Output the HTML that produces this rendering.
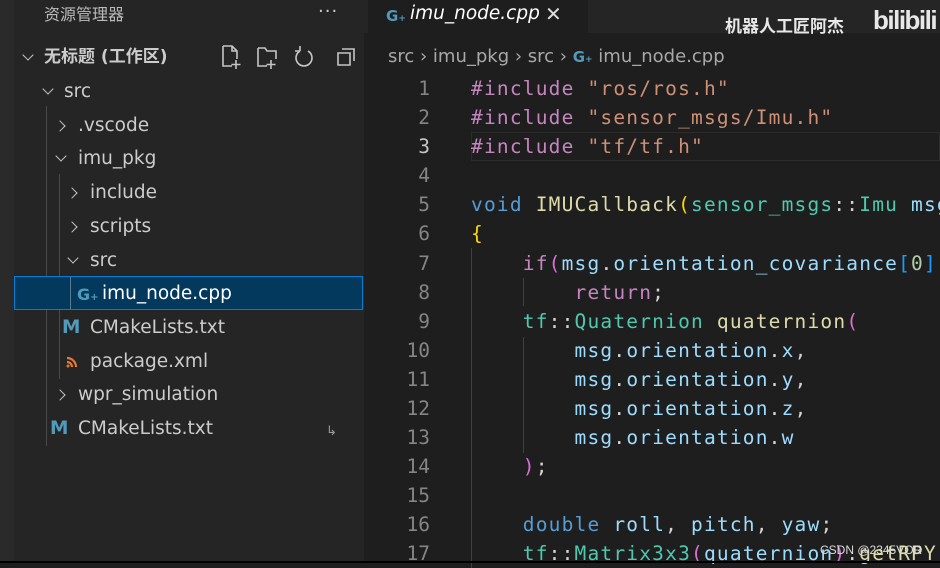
<!DOCTYPE html>
<html><head><meta charset="utf-8"><style>
*{margin:0;padding:0;box-sizing:border-box}
body{width:940px;height:563px;overflow:hidden;background:#1e1e1e;position:relative;font-family:"DejaVu Sans","Noto Sans CJK SC",sans-serif;color:#cccccc}
.abs{position:absolute;white-space:pre}
#strip{left:0;top:0;width:14px;height:563px;background:#2a2a2a}
#side{left:14px;top:0;width:350px;height:563px;background:#252526}
.row{position:absolute;font-size:18.5px;color:#cccccc;white-space:pre;line-height:24px}
.chev{position:absolute;width:8px;height:8px;border-right:1.6px solid #c5c5c5;border-bottom:1.6px solid #c5c5c5}
.down{transform:rotate(45deg)}
.right{transform:rotate(-45deg)}
.guide{position:absolute;width:1px;background:#4a4a4a}
#tabs{left:364px;top:0;width:576px;height:33px;background:#252526}
#tab{left:368px;top:0;width:220px;height:33px;background:#1e1e1e}
.code{font-family:"DejaVu Sans Mono",monospace;font-size:19.5px;line-height:29.1px}
.ln{position:absolute;left:380px;width:50px;text-align:right;color:#858585}
.cl{position:absolute;left:471px;color:#d4d4d4;white-space:pre;letter-spacing:1.2px}
.k{color:#c586c0}.s{color:#ce9178}.b{color:#569cd6}.f{color:#dcdcaa}.t{color:#4ec9b0}.v{color:#9cdcfe}.y{color:#ffd700}.p{color:#da70d6}.n{color:#b5cea8}.bl{color:#179fff}
</style></head><body>
<div class="abs" id="strip"></div>
<div class="abs" id="side"></div>
<div class="row" style="left:44px;top:3px;font-size:16px;color:#bbbbbb">资源管理器</div>
<div class="row" style="left:318px;top:0px;font-size:18px;letter-spacing:1px">···</div>
<div class="chev down" style="left:24px;top:51px"></div>
<div class="row" style="left:44px;top:45px;font-size:17px;font-weight:bold">无标题 (工作区)</div>
<svg class="abs" style="left:220px;top:44px" width="140" height="26" viewBox="0 0 140 26" fill="none" stroke="#c5c5c5" stroke-width="1.6">
<path d="M3 2h9l5 5v8M3 2v20h9M12 2v5h5M16 16v9M11.5 20.5h9"/>
<path d="M38 4h7l2 3h9v8M38 4v18h9M51 16v9M46.5 20.5h9"/>
<path d="M80 7a8 8 0 1 0 8 0M80 7v-5M80 7h-5"/>
<path d="M118 9h12v12h-12zM122 5h12v12"/>
</svg>
<div class="chev down" style="left:44px;top:85px"></div>
<div class="row" style="left:64px;top:80px">src</div>
<div class="guide" style="left:46px;top:106px;height:340px"></div>
<div class="chev right" style="left:56px;top:122px"></div>
<div class="row" style="left:78px;top:114px">.vscode</div>
<div class="chev down" style="left:57px;top:152px"></div>
<div class="row" style="left:78px;top:147px">imu_pkg</div>
<div class="guide" style="left:59px;top:174px;height:205px"></div>
<div class="chev right" style="left:68px;top:189px"></div>
<div class="row" style="left:90px;top:181px">include</div>
<div class="chev right" style="left:68px;top:223px"></div>
<div class="row" style="left:90px;top:215px">scripts</div>
<div class="chev down" style="left:69px;top:254px"></div>
<div class="row" style="left:90px;top:249px">src</div>
<div class="abs" style="left:14px;top:276px;width:349px;height:34px;background:#04395e;border:1px solid #007fd4"></div>
<div class="guide" style="left:70px;top:277px;height:32px;background:#5a7a90"></div>
<div class="row" style="left:77px;top:283px;font-size:16px;color:#519aba;font-weight:bold">G<span style="font-size:10px">+</span></div>
<div class="row" style="left:102px;top:282px;color:#fff">imu_node.cpp</div>
<div class="row" style="left:62px;top:316px;color:#519aba;font-weight:bold">M</div>
<div class="row" style="left:90px;top:316px">CMakeLists.txt</div>
<svg class="abs" style="left:66px;top:354px" width="14" height="14" viewBox="0 0 14 14" fill="none" stroke="#e37933" stroke-width="2.2"><path d="M1 4a9 9 0 0 1 9 9M1 8a5 5 0 0 1 5 5"/><circle cx="2" cy="12" r="1.5" fill="#e37933" stroke="none"/></svg>
<div class="row" style="left:90px;top:350px">package.xml</div>
<div class="chev right" style="left:56px;top:391px"></div>
<div class="row" style="left:78px;top:383px">wpr_simulation</div>
<div class="row" style="left:50px;top:417px;color:#519aba;font-weight:bold">M</div>
<div class="row" style="left:78px;top:417px">CMakeLists.txt</div>
<div class="row" style="left:326px;top:420px;font-size:13px;color:#999">↳</div>

<div class="abs" id="tabs"></div>
<div class="abs" id="tab"></div>
<div class="row" style="left:386px;top:4px;font-size:15px;color:#519aba;font-weight:bold">G<span style="font-size:9px">+</span></div>
<div class="row" style="left:410px;top:2px;font-style:italic;color:#fff">imu_node.cpp</div>
<div class="row" style="left:545px;top:2px;font-size:20px;color:#ddd">✕</div>
<div class="row" style="left:725px;top:15px;font-size:17px;color:#e8e8e8;font-weight:bold">机器人工匠阿杰</div>
<div class="row" style="left:873px;top:8px;font-size:26px;color:#e8e8e8;font-weight:bold;font-family:'Liberation Sans',sans-serif;letter-spacing:-1.5px">bilibili</div>

<div class="row" style="left:388px;top:45px;font-size:18px;color:#a9a9a9">src › imu_pkg › src › <span style="color:#519aba;font-weight:bold;font-size:15px">G<span style="font-size:9px">+</span></span> imu_node.cpp</div>

<div class="code">
<div class="abs" style="left:471px;top:132px;width:469px;height:29px;border:1px solid #2c2c2c"></div>
<div class="guide" style="left:471px;top:248px;height:320px;background:#404040"></div>
<div class="guide" style="left:523px;top:278px;height:28px;background:#404040"></div>
<div class="guide" style="left:523px;top:337px;height:116px;background:#404040"></div>
<div class="ln" style="top:74px">1</div><div class="cl" style="top:74px"><span class="k">#include</span> <span class="s">"ros/ros.h"</span></div>
<div class="ln" style="top:103px">2</div><div class="cl" style="top:103px"><span class="k">#include</span> <span class="s">"sensor_msgs/Imu.h"</span></div>
<div class="ln" style="top:132px;color:#c6c6c6">3</div><div class="cl" style="top:132px"><span class="k">#include</span> <span class="s">"tf/tf.h"</span></div>
<div class="ln" style="top:161px">4</div>
<div class="ln" style="top:190px">5</div><div class="cl" style="top:190px"><span class="b">void</span> <span class="f">IMUCallback</span><span class="y">(</span><span class="t">sensor_msgs</span>::<span class="t">Imu</span> <span class="v">msg</span></div>
<div class="ln" style="top:219px">6</div><div class="cl" style="top:219px"><span class="y">{</span></div>
<div class="ln" style="top:249px">7</div><div class="cl" style="top:249px">    <span class="k">if</span><span class="p">(</span><span class="v">msg</span>.<span class="v">orientation_covariance</span><span class="bl">[</span><span class="n">0</span><span class="bl">]</span></div>
<div class="ln" style="top:278px">8</div><div class="cl" style="top:278px">        <span class="k">return</span>;</div>
<div class="ln" style="top:307px">9</div><div class="cl" style="top:307px">    <span class="t">tf</span>::<span class="t">Quaternion</span> <span class="f">quaternion</span><span class="p">(</span></div>
<div class="ln" style="top:336px">10</div><div class="cl" style="top:336px">        <span class="v">msg</span>.<span class="v">orientation</span>.<span class="v">x</span>,</div>
<div class="ln" style="top:365px">11</div><div class="cl" style="top:365px">        <span class="v">msg</span>.<span class="v">orientation</span>.<span class="v">y</span>,</div>
<div class="ln" style="top:394px">12</div><div class="cl" style="top:394px">        <span class="v">msg</span>.<span class="v">orientation</span>.<span class="v">z</span>,</div>
<div class="ln" style="top:423px">13</div><div class="cl" style="top:423px">        <span class="v">msg</span>.<span class="v">orientation</span>.<span class="v">w</span></div>
<div class="ln" style="top:452px">14</div><div class="cl" style="top:452px">    <span class="p">)</span>;</div>
<div class="ln" style="top:481px">15</div>
<div class="ln" style="top:510px">16</div><div class="cl" style="top:510px">    <span class="b">double</span> <span class="v">roll</span>, <span class="v">pitch</span>, <span class="v">yaw</span>;</div>
<div class="ln" style="top:539px">17</div><div class="cl" style="top:539px">    <span class="t">tf</span>::<span class="t">Matrix3x3</span><span class="p">(</span><span class="v">quaternion</span><span class="p">)</span>.<span class="f">getRPY</span></div>
</div>
<div class="row" style="left:820px;top:538px;font-size:12px;color:#ddd;font-family:'Liberation Sans',sans-serif">CSDN @2345VOR</div>
<div class="abs" style="left:0;top:561px;width:940px;height:2px;background:#000"></div>
</body></html>
